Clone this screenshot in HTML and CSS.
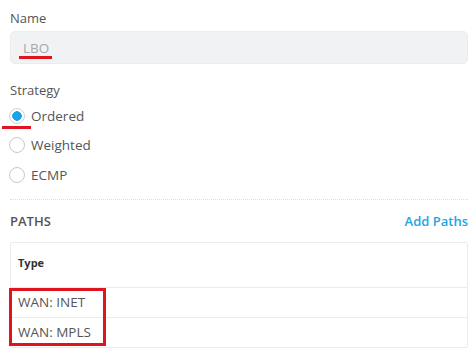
FILE: index.html
```html
<!DOCTYPE html>
<html lang="en">
<head>
    <meta charset="UTF-8">
    <meta name="viewport" content="width=device-width, initial-scale=1.0">
    <title>Path Group</title>
    <link rel="stylesheet" href="styles.css">
</head>
<body>
    <div class="form">
        <label class="field-label" for="name">Name</label>
        <div class="input-wrap">
            <input type="text" id="name" class="text-input" placeholder="LBO" disabled>
            <span class="mark-line name-mark"></span>
        </div>

        <div class="field-label strategy-label">Strategy</div>
        <div class="radios">
            <label class="radio-row">
                <span class="radio checked"></span> Ordered
                <span class="mark-line radio-mark"></span>
            </label>
            <label class="radio-row"><span class="radio"></span> Weighted</label>
            <label class="radio-row"><span class="radio"></span> ECMP</label>
        </div>

        <div class="divider"></div>

        <div class="paths-head">
            <span class="paths-title">PATHS</span>
            <a class="add-link" href="#">Add Paths</a>
        </div>

        <div class="table">
            <div class="table-head">Type</div>
            <div class="table-body">
                <div class="table-row">WAN: INET</div>
                <div class="table-row">WAN: MPLS</div>
                <span class="mark-box"></span>
            </div>
        </div>
    </div>
</body>
</html>
```

FILE: styles.css
```css
body { margin: 0; background: #fff; font-family: "Open Sans", Arial, sans-serif; color: #555; font-size: 13px; }
.form { padding: 7px 6px 0 10px; }
.field-label { display: block; height: 22px; line-height: 22px; }
.input-wrap { position: relative; margin-top: 2px; }
.text-input { box-sizing: border-box; width: 100%; height: 33px; border: 1px solid #ebecee; border-radius: 5px; background: #f1f2f4; padding: 0 12px; font: inherit; font-size: 13.5px; }
.text-input::placeholder { color: #a8a8a8; }
.mark-line { position: absolute; height: 3px; background: #e0141e; }
.name-mark { left: 9px; top: 25px; width: 33px; }
.strategy-label { margin-top: 15px; }
.radios { margin-top: 0; }
.radio-row { position: relative; display: flex; align-items: center; gap: 6px; height: 29.5px; font-size: 13.5px; }
.radio { box-sizing: border-box; width: 16px; height: 16px; border: 1px solid #c9c9c9; border-radius: 50%; margin-left: -1px; background: #fff; }
.radio.checked { border-color: #d0d0d0; background: radial-gradient(circle, #1aa3e8 0 4.5px, #fff 5px); }
.radio-mark { left: -8px; top: 25px; width: 29px; }
.divider { margin-top: 9px; border-top: 1px dotted #dcdcdc; }
.paths-head { display: flex; justify-content: space-between; align-items: center; margin-top: 11px; height: 20px; }
.paths-title { font-weight: 600; color: #555; }
.add-link { color: #1ea5e4; font-weight: 600; text-decoration: none; }
.table { margin-top: 11px; border: 1px solid #ebebeb; border-radius: 2px; }
.table-head { height: 44px; line-height: 40px; padding-left: 7px; box-sizing: border-box; font-size: 11px; font-weight: 700; color: #333; }
.table-body { position: relative; }
.table-row { height: 29px; line-height: 29px; padding-left: 7px; border-top: 1px solid #ebebeb; color: #555; font-size: 13.5px; }
.mark-box { position: absolute; left: -2px; top: 1px; width: 91px; height: 52px; border: 3px solid #e0141e; }
```
